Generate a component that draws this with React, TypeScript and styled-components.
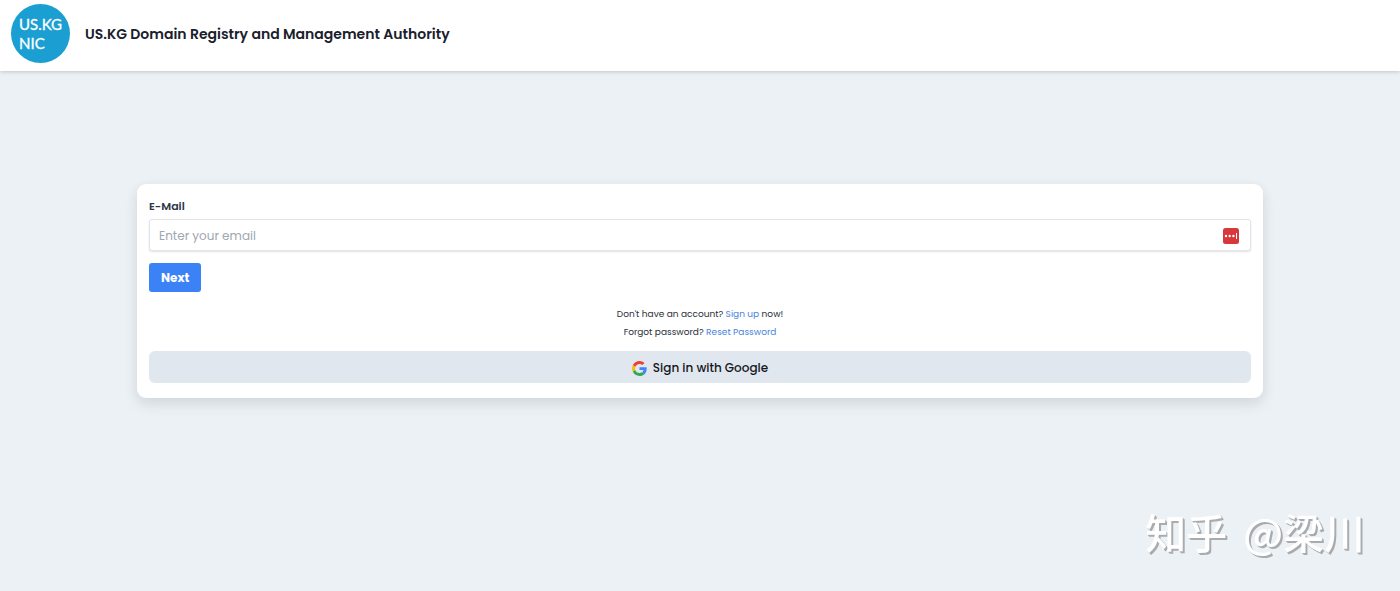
import React from "react";
import styled, { createGlobalStyle } from "styled-components";

const GlobalStyle = createGlobalStyle`
  *, *::before, *::after { box-sizing: border-box; }
  body {
    margin: 0;
    background: #ecf1f5;
    color: #1a202c;
    font-family: Poppins, Inter, "Noto Sans CJK SC", sans-serif;
  }
`;

const Page = styled.div`
  display: flex;
  flex-direction: column;
  min-height: 100vh;
`;

const Header = styled.header`
  display: flex;
  align-items: center;
  gap: 15px;
  padding: 4px 11px 8px;
  background: #fff;
  box-shadow: 0 1px 4px rgba(0, 0, 0, 0.18);
`;

const Logo = styled.svg`
  display: block;
  flex: none;
  width: 59px;
  height: 59px;
`;

const Title = styled.h1`
  margin: 0;
  font-size: 14px;
  line-height: 20px;
  font-weight: 600;
`;

const Main = styled.main`
  flex: 1;
  padding: 113px 12px 48px;
`;

const Card = styled.form`
  display: flex;
  flex-direction: column;
  align-items: flex-start;
  max-width: 1126px;
  margin: 0 auto;
  padding: 14px 12px 15px;
  background: #fff;
  border-radius: 9px;
  box-shadow: 0 7px 14px rgba(50, 60, 80, 0.1), 0 2px 12px rgba(50, 60, 80, 0.05);
`;

const Label = styled.label`
  margin-bottom: 5px;
  font-size: 11px;
  line-height: 16px;
  font-weight: 600;
  color: #2d3748;
`;

const Field = styled.div`
  display: flex;
  align-items: center;
  width: 100%;
  height: 32px;
  padding: 1px 11px 0 9px;
  border: 1px solid #e2e4e8;
  border-radius: 3px;
  background: #fff;
  box-shadow: 0 1px 2px rgba(0, 0, 0, 0.12);
`;

const EmailInput = styled.input`
  flex: 1;
  min-width: 0;
  padding: 0;
  border: 0;
  outline: 0;
  background: transparent;
  font: inherit;
  font-size: 12px;
  line-height: 20px;
  color: #2d3748;

  &::placeholder {
    color: #a0a7b1;
    opacity: 1;
  }
`;

const PasswordIcon = styled.svg`
  display: block;
  flex: none;
  width: 16px;
  height: 16px;
`;

const NextButton = styled.button`
  margin: 12px 0 13px;
  padding: 5px 12px;
  border: 0;
  border-radius: 3px;
  background: #3b82f6;
  color: #fff;
  font: inherit;
  font-size: 12px;
  line-height: 19px;
  font-weight: 700;
  cursor: pointer;
`;

const Help = styled.p`
  align-self: center;
  margin: 0;
  font-size: 9px;
  line-height: 18px;
  color: #2b2f38;
`;

const HelpLink = styled.a`
  color: #4a83dc;
  text-decoration: none;
`;

const GoogleButton = styled.button`
  display: flex;
  align-items: center;
  justify-content: center;
  gap: 6px;
  width: 100%;
  margin-top: 10px;
  padding: 7px 12px 5px;
  border: 0;
  border-radius: 6px;
  background: #e1e7ef;
  color: #14171d;
  font: inherit;
  font-size: 12px;
  line-height: 20px;
  font-weight: 500;
  cursor: pointer;
`;

const GoogleLogo = styled.svg`
  display: block;
  width: 15px;
  height: 15px;
`;

const Watermark = styled.div`
  position: fixed;
  right: 35px;
  bottom: 36px;
  display: flex;
  gap: 16px;
  font-family: "Noto Sans CJK SC", sans-serif;
  font-size: 41px;
  line-height: 48px;
  font-weight: 500;
  color: #fff;
  text-shadow: 1px 1px 0 #a9acaf, 2px 2px 0 #a9acaf;
  white-space: nowrap;
  pointer-events: none;
`;

export default function App() {
  return (
    <Page>
      <GlobalStyle />
      <Header>
        <Logo viewBox="0 0 59 59" role="img" aria-label="US.KG NIC">
          <circle cx="29.5" cy="29.5" r="29.5" fill="#1b9fd2" />
          <g fill="#fff" fontFamily="Lato, sans-serif" fontSize="15" stroke="#fff" strokeWidth="0.3">
            <text x="8" y="26">US.KG</text>
            <text x="8" y="45">NIC</text>
          </g>
        </Logo>
        <Title>US.KG Domain Registry and Management Authority</Title>
      </Header>
      <Main>
        <Card onSubmit={(event) => event.preventDefault()}>
          <Label htmlFor="email">E-Mail</Label>
          <Field>
            <EmailInput id="email" type="email" placeholder="Enter your email" />
            <PasswordIcon viewBox="0 0 16 16" aria-hidden="true">
              <rect width="16" height="16" rx="2.5" fill="#d7383b" />
              <g fill="#fff">
                <circle cx="3" cy="8" r="1.2" />
                <circle cx="6.7" cy="8" r="1.2" />
                <circle cx="10.4" cy="8" r="1.2" />
                <rect x="13" y="5" width="1" height="6" />
              </g>
            </PasswordIcon>
          </Field>
          <NextButton type="submit">Next</NextButton>
          <Help>
            Don't have an account? <HelpLink href="#signup">Sign up</HelpLink> now!
          </Help>
          <Help>
            Forgot password? <HelpLink href="#reset">Reset Password</HelpLink>
          </Help>
          <GoogleButton type="button">
            <GoogleLogo viewBox="0 0 48 48" aria-hidden="true">
              <path fill="#EA4335" d="M24 9.5c3.54 0 6.71 1.22 9.21 3.6l6.85-6.85C35.9 2.38 30.47 0 24 0 14.62 0 6.51 5.38 2.56 13.22l7.98 6.19C12.43 13.72 17.74 9.5 24 9.5z" />
              <path fill="#4285F4" d="M46.98 24.55c0-1.57-.15-3.09-.38-4.55H24v9.02h12.94c-.58 2.96-2.26 5.48-4.78 7.18l7.73 6c4.51-4.18 7.09-10.36 7.09-17.65z" />
              <path fill="#FBBC05" d="M10.53 28.59c-.48-1.45-.76-2.99-.76-4.59s.27-3.14.76-4.59l-7.98-6.19C.92 16.46 0 20.12 0 24c0 3.88.92 7.54 2.56 10.78l7.97-6.19z" />
              <path fill="#34A853" d="M24 48c6.48 0 11.93-2.13 15.89-5.81l-7.73-6c-2.15 1.45-4.92 2.3-8.16 2.3-6.26 0-11.57-4.22-13.47-9.91l-7.98 6.19C6.51 42.62 14.62 48 24 48z" />
            </GoogleLogo>
            Sign in with Google
          </GoogleButton>
        </Card>
      </Main>
      <Watermark>
        <span>知乎</span>
        <span>@梁川</span>
      </Watermark>
    </Page>
  );
}
